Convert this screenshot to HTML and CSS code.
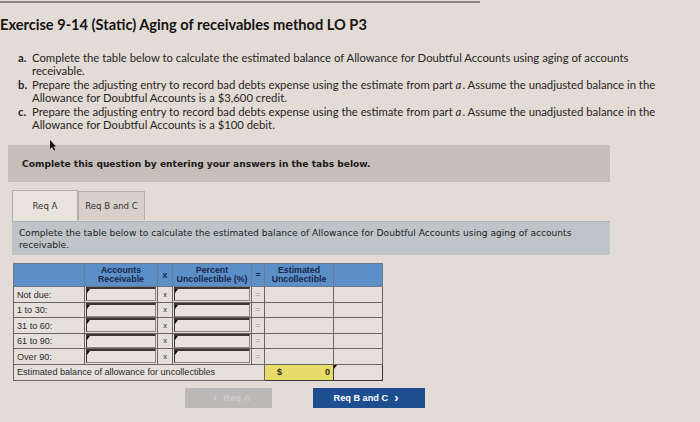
FILE: index.html
```html
<!DOCTYPE html>
<html>
<head>
<meta charset="utf-8">
<link rel="stylesheet" href="styles.css">
</head>
<body>
<div class="page">
  <div class="topline"></div>
  <h1 class="title">Exercise 9-14 (Static) Aging of receivables method LO P3</h1>
  <ol class="parts">
    <li><span class="mk">a.</span><span>Complete the table below to calculate the estimated balance of Allowance for Doubtful Accounts using aging of accounts receivable.</span></li>
    <li><span class="mk">b.</span><span class="txt"><span class="ln">Prepare the adjusting entry to record bad debts expense using the estimate from part <i>a</i>. Assume the unadjusted balance in the</span><span class="ln">Allowance for Doubtful Accounts is a $3,600 credit.</span></span></li>
    <li><span class="mk">c.</span><span class="txt"><span class="ln">Prepare the adjusting entry to record bad debts expense using the estimate from part <i>a</i>. Assume the unadjusted balance in the</span><span class="ln">Allowance for Doubtful Accounts is a $100 debit.</span></span></li>
  </ol>
  <div class="prompt-wrap">
    <svg class="cursor" width="8" height="11" viewBox="0 0 8 11"><path d="M1 0 L1 9 L3 7 L5 10.5 L6.3 9.8 L4.4 6.6 L7 6.4 Z" fill="#111"/></svg>
    <div class="prompt">Complete this question by entering your answers in the tabs below.</div>
  </div>
  <div class="tabs">
    <div class="tab active">Req A</div>
    <div class="tab">Req B and C</div>
  </div>
  <div class="instr">Complete the table below to calculate the estimated balance of Allowance for Doubtful Accounts using aging of accounts receivable.</div>
  <table class="aging">
    <colgroup>
      <col class="c1"><col class="c2"><col class="c3"><col class="c4"><col class="c5"><col class="c6"><col class="c7">
    </colgroup>
    <thead>
      <tr>
        <th></th>
        <th>Accounts<br>Receivable</th>
        <th>x</th>
        <th>Percent<br>Uncollectible (%)</th>
        <th>=</th>
        <th>Estimated<br>Uncollectible</th>
        <th></th>
      </tr>
    </thead>
    <tbody>
      <tr><td class="lbl">Not due:</td><td class="inp"><div class="box"></div></td><td class="op">x</td><td class="inp"><div class="box"></div></td><td class="op eq">=</td><td></td><td></td></tr>
      <tr><td class="lbl">1 to 30:</td><td class="inp"><div class="box"></div></td><td class="op">x</td><td class="inp"><div class="box"></div></td><td class="op eq">=</td><td></td><td></td></tr>
      <tr><td class="lbl">31 to 60:</td><td class="inp"><div class="box"></div></td><td class="op">x</td><td class="inp"><div class="box"></div></td><td class="op eq">=</td><td></td><td></td></tr>
      <tr><td class="lbl">61 to 90:</td><td class="inp"><div class="box"></div></td><td class="op">x</td><td class="inp"><div class="box"></div></td><td class="op eq">=</td><td></td><td></td></tr>
      <tr><td class="lbl">Over 90:</td><td class="inp"><div class="box"></div></td><td class="op">x</td><td class="inp"><div class="box"></div></td><td class="op eq">=</td><td></td><td></td></tr>
      <tr class="total"><td colspan="5" class="lbl">Estimated balance of allowance for uncollectibles</td><td class="yellow"><span>$</span><span class="zero">0</span></td><td class="flagcell"></td></tr>
    </tbody>
  </table>
  <div class="nav">
    <div class="btn prev"><span class="chev">&lsaquo;</span> Req A</div>
    <div class="btn next">Req B and C <span class="chev">&rsaquo;</span></div>
  </div>
</div>
</body>
</html>
```
FILE: styles.css
```css
html, body {
  margin: 0;
  padding: 0;
}
body {
  background: #e3dbd5;
  width: 700px;
  height: 422px;
  overflow: hidden;
  font-family: Lato, "Liberation Sans", sans-serif;
  color: #1c1c1c;
}
.page {
  position: relative;
  padding-top: 1px;
}
.topline {
  width: 480px;
  height: 2px;
  background: #8c8782;
}
.title {
  margin: 13px 0 0 0;
  font-family: Lato, "Liberation Sans", sans-serif;
  font-weight: 700;
  font-size: 14.6px;
  line-height: 18px;
  color: #141414;
}
.parts {
  list-style: none;
  margin: 17px 0 0 18px;
  padding: 0;
  width: 650px;
  font-size: 11.3px;
  line-height: 13.4px;
  color: #262626;
}
.parts li {
  display: flex;
}
.parts .mk {
  width: 14px;
  flex: none;
  font-weight: 700;
}
.ln {
  display: block;
  white-space: nowrap;
}
.ln i {
  padding-right: 1px;
}
.prompt-wrap {
  position: relative;
  margin: 14px 0 0 8px;
}
.cursor {
  position: absolute;
  left: 41px;
  top: -5px;
}
.prompt {
  width: 588px;
  height: 37px;
  background: #c6beb9;
  padding-left: 14px;
  display: flex;
  align-items: center;
  font-family: "DejaVu Sans", Verdana, sans-serif;
  font-weight: 700;
  font-size: 9.1px;
  color: #1a1a1a;
}
.tabs {
  display: flex;
  margin: 8px 0 0 12px;
  height: 31px;
}
.tab {
  box-sizing: border-box;
  height: 31px;
  display: flex;
  align-items: center;
  justify-content: center;
  font-family: "DejaVu Sans", Verdana, sans-serif;
  font-size: 8.6px;
  color: #333;
  border: 1px solid #b5aea9;
  border-bottom: none;
}
.tab.active {
  width: 66px;
  background: #e9e3de;
}
.tab:not(.active) {
  width: 67px;
  background: #d8d0cb;
  height: 29px;
  margin-top: 1px;
}
.instr {
  margin-left: 12px;
  width: 598px;
  height: 34px;
  padding: 6px 20px 0 7px;
  box-sizing: border-box;
  background: #bec4c8;
  border-top: 1px solid #a9b0b4;
  font-family: "DejaVu Sans", Verdana, sans-serif;
  font-size: 9.1px;
  line-height: 11.5px;
  color: #222;
}
.aging {
  margin: 8px 0 0 13px;
  border-collapse: collapse;
  table-layout: fixed;
  width: 369px;
  font-family: "Liberation Sans", Arial, sans-serif;
  font-size: 9.1px;
}
.c1 { width: 71px; }
.c2 { width: 73px; }
.c3 { width: 15px; }
.c4 { width: 79px; }
.c5 { width: 13px; }
.c6 { width: 69px; }
.c7 { width: 49px; }
.aging th {
  background: #5c8ec8;
  color: #17284a;
  font-weight: 700;
  font-size: 8.8px;
  height: 22px;
  padding: 0;
  line-height: 9.8px;
  border: 1px solid #6f7b8a;
  text-align: center;
  vertical-align: middle;
}
.aging td {
  height: 14.5px;
  padding: 0;
  border: 1px solid #6a6560;
  background: #e6e0dc;
  color: #2a2a2a;
  vertical-align: middle;
  line-height: 10px;
}
.aging td.lbl {
  padding-left: 3px;
  white-space: nowrap;
}
.aging td.op {
  text-align: center;
  font-size: 7.5px;
}
.aging td.eq {
  color: #8a8a8a;
}
.aging td.inp {
  padding: 0 1px;
  vertical-align: top;
}
.box {
  position: relative;
  height: 14px;
  border-top: 2px solid #3a3632;
  border-left: 1px solid #3a3632;
  border-right: 1px solid #8a847f;
  border-bottom: 1px solid #8a847f;
  background: #e8e2de;
  box-sizing: border-box;
}
.box::before,
.flagcell::before {
  content: "";
  position: absolute;
  left: 0;
  top: 0;
  border-top: 4px solid #111;
  border-right: 3px solid transparent;
}
.aging tr.total td {
  height: 15px;
}
.aging td.yellow {
  background: #e8dc68;
  border: 1px solid #3c3a30;
  padding: 0 3px 0 12px;
  font-weight: 700;
  color: #2b2a1e;
}
.zero {
  float: right;
}
.aging td.flagcell {
  position: relative;
  border: 1px solid #3a3632;
}
.nav {
  display: flex;
  gap: 41px;
  margin: 7px 0 0 185px;
}
.btn {
  height: 20px;
  display: flex;
  align-items: center;
  justify-content: center;
  font-family: "Liberation Sans", Arial, sans-serif;
  font-weight: 700;
  font-size: 9.2px;
  color: #fff;
}
.btn.prev {
  width: 87px;
  background: #bbb8b8;
  color: #d0cccc;
}
.btn.next {
  width: 112px;
  background: #1d4f90;
}
.chev {
  font-size: 13px;
  margin: 0 6px;
  line-height: 10px;
}
```
